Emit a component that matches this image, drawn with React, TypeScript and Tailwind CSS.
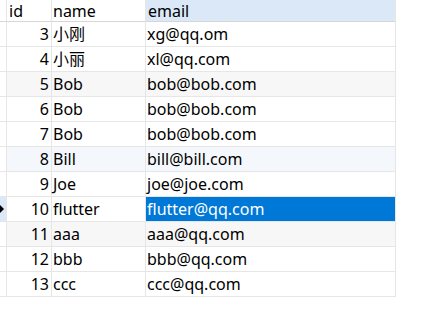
import React from 'react';

const rows = [
  { id: 3, name: '小刚', email: 'xg@qq.om' },
  { id: 4, name: '小丽', email: 'xl@qq.com' },
  { id: 5, name: 'Bob', email: 'bob@bob.com' },
  { id: 6, name: 'Bob', email: 'bob@bob.com' },
  { id: 7, name: 'Bob', email: 'bob@bob.com' },
  { id: 8, name: 'Bill', email: 'bill@bill.com' },
  { id: 9, name: 'Joe', email: 'joe@joe.com' },
  { id: 10, name: 'flutter', email: 'flutter@qq.com' },
  { id: 11, name: 'aaa', email: 'aaa@qq.com' },
  { id: 12, name: 'bbb', email: 'bbb@qq.com' },
  { id: 13, name: 'ccc', email: 'ccc@qq.com' },
];

const cols = 'grid grid-cols-[7px_45px_94px_250px]';
const cell = 'border-r border-b border-[#e6e6e6] flex items-center';

export default function App() {
  return (
    <div
      className="w-[430px] h-[327px] bg-white text-[16px] text-black overflow-hidden"
      style={{ fontFamily: '"Noto Sans", "Noto Sans CJK SC", sans-serif' }}
    >
      <div className={`${cols} h-[22px] leading-none`}>
        <div className={`${cell} border-b-[#d6d6d6]`} />
        <div className={`${cell} border-b-[#d6d6d6] pl-[2px]`}>id</div>
        <div className={`${cell} border-b-[#d6d6d6] pl-[1px]`}>name</div>
        <div className={`${cell} border-b-[#d6d6d6] bg-[#dae8f7] pl-[2px]`}>email</div>
      </div>
      {rows.map((r, i) => {
        const selected = r.id === 10;
        const band = i === 2 || i === 8 ? 'bg-[#f7f7f7]' : i === 5 ? 'bg-[#f4f8fd]' : 'bg-white';
        return (
          <div key={r.id} className={`${cols} h-[25px] leading-none`}>
            <div className={`${cell} ${selected ? 'bg-[#dae8f7]' : 'bg-white'} relative`}>
              {selected && (
                <span className="absolute left-0 top-[8px] w-0 h-0 border-y-[4px] border-y-transparent border-l-[4px] border-l-black" />
              )}
            </div>
            <div className={`${cell} ${band} justify-end pr-[2px]`}>{r.id}</div>
            <div className={`${cell} ${band} pl-[1px]`}>{r.name}</div>
            <div className={`${cell} ${selected ? 'bg-[#0078d7] text-white' : band} pl-[1px]`}>{r.email}</div>
          </div>
        );
      })}
    </div>
  );
}
